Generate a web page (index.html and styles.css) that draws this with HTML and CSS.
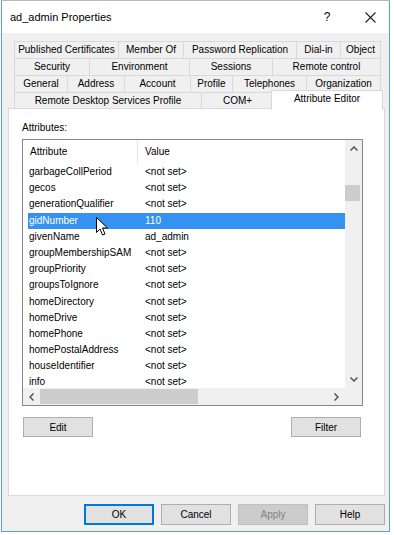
FILE: index.html
```html
<!DOCTYPE html>
<html lang="en">
<head>
    <meta charset="UTF-8">
    <title>ad_admin Properties</title>
    <link rel="stylesheet" href="styles.css">
</head>
<body>

    <div class="window">
        <div class="titlebar">
            <span class="title">ad_admin Properties</span>
            <span class="help-btn">?</span>
            <span class="close-btn">
                <svg width="11" height="11" viewBox="0 0 11 11"><path d="M0.5 0.5 L10.5 10.5 M10.5 0.5 L0.5 10.5" stroke="#222" stroke-width="1.1" fill="none"/></svg>
            </span>
        </div>

        <div class="client">
            <div class="tabs">
                <div class="tab-row row1">
                    <div class="tab">Published Certificates</div>
                    <div class="tab">Member Of</div>
                    <div class="tab">Password Replication</div>
                    <div class="tab">Dial-in</div>
                    <div class="tab">Object</div>
                </div>
                <div class="tab-row row2">
                    <div class="tab">Security</div>
                    <div class="tab">Environment</div>
                    <div class="tab">Sessions</div>
                    <div class="tab">Remote control</div>
                </div>
                <div class="tab-row row3">
                    <div class="tab">General</div>
                    <div class="tab">Address</div>
                    <div class="tab">Account</div>
                    <div class="tab">Profile</div>
                    <div class="tab">Telephones</div>
                    <div class="tab">Organization</div>
                </div>
                <div class="tab-row row4">
                    <div class="tab">Remote Desktop Services Profile</div>
                    <div class="tab">COM+</div>
                    <div class="tab active">Attribute Editor</div>
                </div>
            </div>

            <div class="panel">
                <div class="label">Attributes:</div>

                <div class="listbox">
                    <div class="list-main">
                        <div class="list-area">
                            <div class="list-head">
                                <div class="head-attr">Attribute</div>
                                <div class="head-val">Value</div>
                            </div>
                            <div class="rows">
                                <div class="row"><span class="cell-attr">garbageCollPeriod</span><span class="cell-val">&lt;not set&gt;</span></div>
                                <div class="row"><span class="cell-attr">gecos</span><span class="cell-val">&lt;not set&gt;</span></div>
                                <div class="row"><span class="cell-attr">generationQualifier</span><span class="cell-val">&lt;not set&gt;</span></div>
                                <div class="row selected"><span class="cell-attr">gidNumber</span><span class="cell-val">110</span></div>
                                <div class="row"><span class="cell-attr">givenName</span><span class="cell-val">ad_admin</span></div>
                                <div class="row"><span class="cell-attr">groupMembershipSAM</span><span class="cell-val">&lt;not set&gt;</span></div>
                                <div class="row"><span class="cell-attr">groupPriority</span><span class="cell-val">&lt;not set&gt;</span></div>
                                <div class="row"><span class="cell-attr">groupsToIgnore</span><span class="cell-val">&lt;not set&gt;</span></div>
                                <div class="row"><span class="cell-attr">homeDirectory</span><span class="cell-val">&lt;not set&gt;</span></div>
                                <div class="row"><span class="cell-attr">homeDrive</span><span class="cell-val">&lt;not set&gt;</span></div>
                                <div class="row"><span class="cell-attr">homePhone</span><span class="cell-val">&lt;not set&gt;</span></div>
                                <div class="row"><span class="cell-attr">homePostalAddress</span><span class="cell-val">&lt;not set&gt;</span></div>
                                <div class="row"><span class="cell-attr">houseIdentifier</span><span class="cell-val">&lt;not set&gt;</span></div>
                                <div class="row"><span class="cell-attr">info</span><span class="cell-val">&lt;not set&gt;</span></div>
                            </div>
                            <!-- mouse pointer over gidNumber -->
                            <svg class="pointer" width="13" height="20" viewBox="0 0 13 20">
                                <path d="M0.5 0.5 L0.5 15.5 L4 12 L6.5 18 L9 17 L6.5 11 L11.5 11 Z" fill="#fff" stroke="#000" stroke-width="1" stroke-linejoin="round"/>
                            </svg>
                        </div>
                        <div class="vscroll">
                            <div class="arrow">
                                <svg width="8" height="5" viewBox="0 0 8 5"><path d="M0.5 4.5 L4 1 L7.5 4.5" stroke="#555" stroke-width="1.5" fill="none"/></svg>
                            </div>
                            <div class="vtrack"><div class="vthumb"></div></div>
                            <div class="arrow">
                                <svg width="8" height="5" viewBox="0 0 8 5"><path d="M0.5 0.5 L4 4 L7.5 0.5" stroke="#555" stroke-width="1.5" fill="none"/></svg>
                            </div>
                        </div>
                    </div>
                    <div class="hscroll-row">
                        <div class="arrow harrow">
                            <svg width="5" height="8" viewBox="0 0 5 8"><path d="M4.5 0.5 L1 4 L4.5 7.5" stroke="#555" stroke-width="1.5" fill="none"/></svg>
                        </div>
                        <div class="htrack"><div class="hthumb"></div></div>
                        <div class="arrow harrow">
                            <svg width="5" height="8" viewBox="0 0 5 8"><path d="M0.5 0.5 L4 4 L0.5 7.5" stroke="#555" stroke-width="1.5" fill="none"/></svg>
                        </div>
                        <div class="corner"></div>
                    </div>
                </div>

                <div class="actions">
                    <button class="btn">Edit</button>
                    <button class="btn">Filter</button>
                </div>
            </div>

            <div class="footer">
                <button class="btn default">OK</button>
                <button class="btn">Cancel</button>
                <button class="btn disabled">Apply</button>
                <button class="btn">Help</button>
            </div>
        </div>
    </div>

</body>
</html>
```

FILE: styles.css
```css
body {
    margin: 0;
    padding: 0;
    background: #ffffff;
    font-family: "Liberation Sans", Arial, sans-serif;
    font-size: 10px;
    color: #000;
}
.window {
    box-sizing: border-box;
    width: 389px;
    height: 532px;
    margin-left: 1px;
    border: 1px solid #5a9fd4;
    border-top-color: #b9b9b9;
    background: #f0f0f0;
    display: flex;
    flex-direction: column;
}
.titlebar {
    height: 32px;
    background: #fff;
    display: flex;
    align-items: center;
    padding-left: 8px;
}
.title {
    flex: 1;
    font-size: 11px;
}
.help-btn {
    width: 20px;
    text-align: center;
    font-size: 12px;
    margin-right: 28px;
}
.close-btn {
    width: 11px;
    height: 11px;
    margin-right: 13px;
}
.close-btn svg {
    display: block;
}
.client {
    flex: 1;
    padding-top: 8px;
    display: flex;
    flex-direction: column;
}

/* tabs */
.tabs {
    margin-left: 12px;
    width: 367px;
}
.tab-row {
    display: grid;
    height: 17px;
}
.row1 { grid-template-columns: 104px 65px 113px 44px 41px; }
.row2 { grid-template-columns: 75px 100px 83px 109px; }
.row3 { grid-template-columns: 53px 57px 66px 42px 74px 75px; }
.row4 { grid-template-columns: 187px 72px 108px; }
.tab {
    border-top: 1px solid #d9d9d9;
    border-left: 1px solid #d9d9d9;
    line-height: 16px;
    text-align: center;
    white-space: nowrap;
    overflow: hidden;
}
.tab:last-child {
    border-right: 1px solid #d9d9d9;
}
.tab.active {
    position: relative;
    z-index: 1;
    background: #fff;
    height: 19px;
    margin: -2px -2px 0 -2px;
    line-height: 15px;
}

/* panel */
.panel {
    box-sizing: border-box;
    width: 377px;
    height: 388px;
    margin-left: 6px;
    margin-top: -1px;
    border: 1px solid #d9d9d9;
    background: #fff;
    padding: 13px 0 0 13px;
}
.label {
    height: 12px;
    line-height: 12px;
    margin-bottom: 5px;
}
.listbox {
    box-sizing: border-box;
    width: 341px;
    height: 267px;
    border: 1px solid #828790;
    display: flex;
    flex-direction: column;
}
.list-main {
    display: flex;
    height: 248px;
}
.list-area {
    flex: 1;
    position: relative;
    overflow: hidden;
}
.list-head {
    display: flex;
    height: 24px;
    line-height: 24px;
}
.head-attr {
    width: 107px;
    padding-left: 7px;
    border-right: 1px solid #e5e5e5;
}
.head-val {
    padding-left: 7px;
}
.row {
    display: flex;
    height: 16.2px;
    line-height: 16.2px;
    margin-left: 5px;
    white-space: nowrap;
}
.cell-attr {
    width: 108px;
    padding-left: 1px;
}
.cell-val {
    padding-left: 8px;
}
.row.selected {
    background: #3592f0;
    color: #fff;
}
.pointer {
    position: absolute;
    left: 73px;
    top: 77px;
}

/* scrollbars */
.vscroll {
    width: 17px;
    background: #f0f0f0;
    display: flex;
    flex-direction: column;
}
.arrow {
    height: 17px;
    display: flex;
    align-items: center;
    justify-content: center;
}
.arrow svg {
    display: block;
}
.vtrack {
    flex: 1;
}
.vthumb {
    width: 15px;
    height: 16px;
    margin-top: 28px;
    background: #cdcdcd;
}
.hscroll-row {
    display: flex;
    height: 17px;
    background: #f0f0f0;
}
.harrow {
    width: 17px;
    height: 17px;
}
.htrack {
    flex: 1;
}
.hthumb {
    width: 158px;
    height: 15px;
    margin-top: 1px;
    background: #cdcdcd;
}
.corner {
    width: 17px;
}

/* buttons */
.btn {
    box-sizing: border-box;
    width: 70px;
    height: 20px;
    padding: 0;
    border: 1px solid #adadad;
    background: #e1e1e1;
    font-family: "Liberation Sans", Arial, sans-serif;
    font-size: 10px;
    color: #000;
}
.actions {
    width: 341px;
    margin-top: 11px;
    padding: 0 2px 0 1px;
    box-sizing: border-box;
    display: flex;
    justify-content: space-between;
}
.footer {
    display: flex;
    justify-content: flex-end;
    gap: 7px;
    margin-top: 8px;
    padding-right: 4px;
}
.footer .btn {
    height: 21px;
}
.btn.default {
    border: 2px solid #0078d7;
}
.btn.disabled {
    background: #cccccc;
    border-color: #bfbfbf;
    color: #838383;
}
```
